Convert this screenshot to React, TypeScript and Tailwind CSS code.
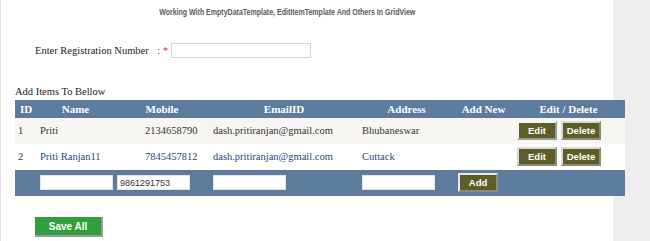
import { useState } from 'react';

type Item = { id: number; name: string; mobile: string; email: string; address: string };

const items: Item[] = [
  { id: 1, name: 'Priti', mobile: '2134658790', email: 'dash.pritiranjan@gmail.com', address: 'Bhubaneswar' },
  { id: 2, name: 'Priti Ranjan11', mobile: '7845457812', email: 'dash.pritiranjan@gmail.com', address: 'Cuttack' },
];

const serif = "font-['Liberation_Serif','Times_New_Roman',serif]";
const sans = "font-['Liberation_Sans',Arial,sans-serif]";

function GridButton({ label, focused }: { label: string; focused?: boolean }) {
  return (
    <button
      type="button"
      className={`h-[19px] w-[40px] bg-[#5e5d27] text-[9.5px] font-bold text-white ${sans} border-2 ${
        focused
          ? 'border-t-[#f4f4f4] border-l-[#f4f4f4] border-r-[#9a9a9a] border-b-[#9a9a9a]'
          : 'border-t-[#d9d9d9] border-l-[#d9d9d9] border-r-[#8a8a7a] border-b-[#8a8a7a]'
      }`}
    >
      {label}
    </button>
  );
}

function FooterInput({ value }: { value?: string }) {
  return (
    <input
      defaultValue={value}
      className={`block h-[15px] w-[73px] bg-white border border-[#e4e4e4] px-[2px] text-[9px] text-[#333] ${sans} outline-none`}
    />
  );
}

export default function App() {
  const [reg, setReg] = useState('');

  return (
    <div className="flex h-[241px] w-[650px] overflow-hidden bg-[#eeeeee]">
      <div className="relative w-[613px] shrink-0 overflow-visible border-l border-[#e2e2e2] bg-white">
        <div className="pr-[40px] pt-[3px] text-center leading-[12px]">
          <span className={`inline-block scale-x-[0.78] text-[9px] font-bold text-[#5a5a5a] ${sans}`}>
            Working With EmptyDataTemplate, EditItemTemplate And Others In GridView
          </span>
        </div>

        <div className={`mt-[25px] flex items-center pl-[34px] text-[10.5px] text-[#222] ${serif}`}>
          <span className="w-[122px]">Enter Registration Number</span>
          <span className="text-[#444]">:</span>
          <span className="ml-[3px] text-[10px] text-[#d22]">*</span>
          <input
            value={reg}
            onChange={(e) => setReg(e.target.value)}
            className="ml-[3px] h-[15px] w-[140px] border border-[#d4d4d4] bg-white outline-none"
          />
        </div>

        <div className={`mt-[27px] pl-[14px] text-[10.5px] leading-[12px] text-[#222] ${serif}`}>Add Items To Bellow</div>

        <table className={`ml-[14px] mt-[2px] w-[610px] table-fixed border-collapse text-[10.5px] ${serif}`}>
          <colgroup>
            <col className="w-[22px]" />
            <col className="w-[77px]" />
            <col className="w-[96px]" />
            <col className="w-[148px]" />
            <col className="w-[97px]" />
            <col className="w-[57px]" />
            <col className="w-[113px]" />
          </colgroup>
          <thead>
            <tr className="h-[18px] bg-[#5d7b9d] text-[11px] font-bold text-white">
              <th className="p-0 text-center">ID</th>
              <th className="p-0 text-center">Name</th>
              <th className="p-0 text-center">Mobile</th>
              <th className="p-0 text-center">EmailID</th>
              <th className="p-0 text-center">Address</th>
              <th className="p-0 text-center">Add New</th>
              <th className="p-0 text-center">Edit / Delete</th>
            </tr>
          </thead>
          <tbody>
            {items.map((it, i) => (
              <tr
                key={it.id}
                className={`h-[26px] ${i % 2 === 0 ? 'bg-[#f7f6f3] text-[#333333]' : 'bg-white text-[#284775]'}`}
              >
                <td className="p-0 pl-[3px]">{it.id}</td>
                <td className="whitespace-nowrap p-0 pl-[3px]">{it.name}</td>
                <td className="p-0 pl-[31px]">{it.mobile}</td>
                <td className="whitespace-nowrap p-0 pl-[3px]">{it.email}</td>
                <td className="p-0 pl-[4px]">{it.address}</td>
                <td className="p-0" />
                <td className="p-0 pl-[5px]">
                  <div className="flex gap-[4px]">
                    <GridButton label="Edit" focused={i === 0} />
                    <GridButton label="Delete" />
                  </div>
                </td>
              </tr>
            ))}
            <tr className="h-[26px] bg-[#5d7b9d]">
              <td className="p-0" />
              <td className="p-0 pl-[3px]">
                <FooterInput />
              </td>
              <td className="p-0 pl-[3px]">
                <FooterInput value="9861291753" />
              </td>
              <td className="p-0 pl-[3px]">
                <FooterInput />
              </td>
              <td className="p-0 pl-[4px]">
                <FooterInput />
              </td>
              <td className="p-0 pl-[3px]">
                <button
                  type="button"
                  className={`h-[19px] w-[40px] bg-[#5e5d27] text-[9.5px] font-bold text-white ${sans} border-2 border-t-[#e8e8e8] border-l-[#e8e8e8] border-r-[#8a8a7a] border-b-[#8a8a7a]`}
                >
                  Add
                </button>
              </td>
              <td className="p-0" />
            </tr>
          </tbody>
        </table>

        <div className="mt-[16px] pl-[34px]">
          <button
            type="button"
            className={`h-[20px] w-[68px] bg-[#2f9e3b] text-[10px] font-bold text-white ${sans} border-b-2 border-r-2 border-b-[#9a9a9a] border-r-[#9a9a9a]`}
          >
            Save All
          </button>
        </div>
      </div>
    </div>
  );
}
